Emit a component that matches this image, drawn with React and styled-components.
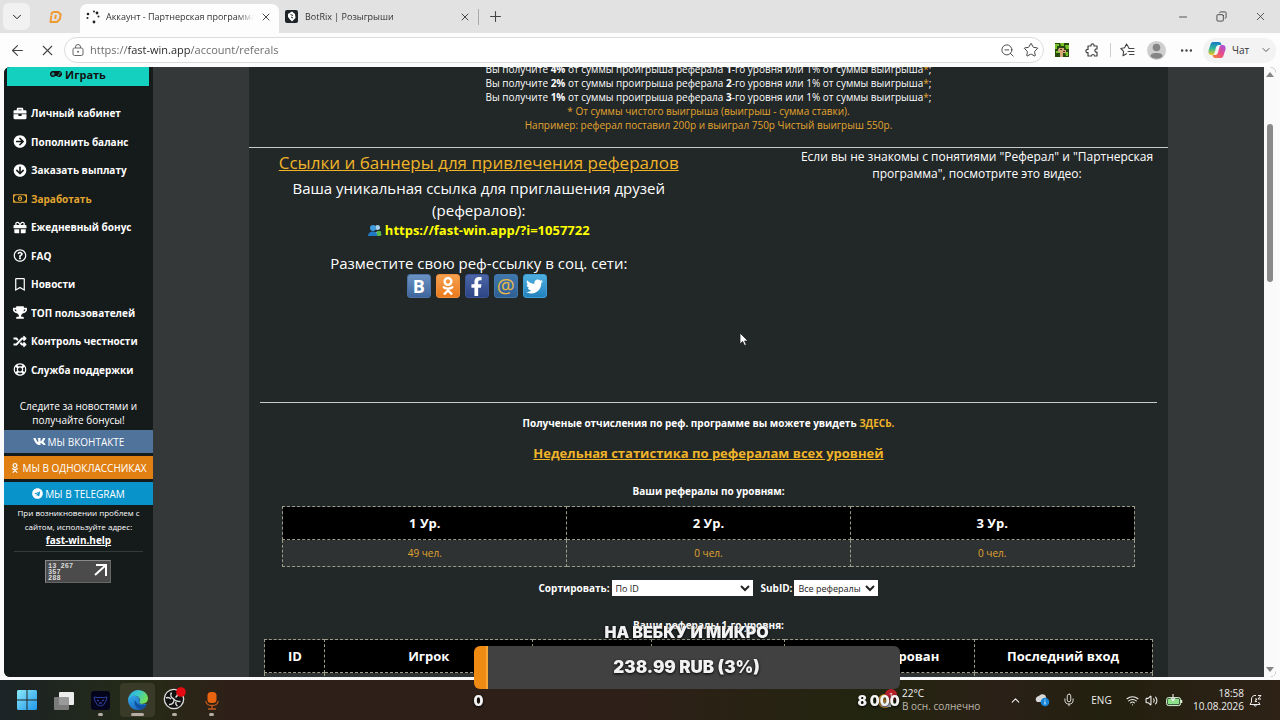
import React from "react";
import styled, { createGlobalStyle } from "styled-components";
import {
	FaArrowCircleDown,
	FaArrowCircleRight,
	FaBriefcase,
	FaFacebookF,
	FaGamepad,
	FaGift,
	FaOdnoklassniki,
	FaRandom,
	FaRegBookmark,
	FaRegLifeRing,
	FaRegMoneyBillAlt,
	FaRegQuestionCircle,
	FaTelegram,
	FaTrophy,
	FaTwitter,
	FaVk,
} from "react-icons/fa";
import {
	ArrowLeft,
	ChevronDown,
	ChevronUp,
	Copy,
	Ellipsis,
	Mic,
	Minus,
	Plus,
	Star,
	Volume2,
	Wifi,
	X,
	ZoomOut,
} from "lucide-react";

const GlobalStyle = createGlobalStyle`
	* {
		box-sizing: border-box;
	}
	body {
		margin: 0;
		font-family: "Open Sans", "Noto Sans", sans-serif;
		overflow: hidden;
	}
	button {
		font-family: inherit;
		padding: 0;
		border: none;
		background: none;
	}
	p, h2, h3, ul {
		margin: 0;
		padding: 0;
	}
	svg {
		display: block;
		flex: none;
	}
`;

const Screen = styled.div`
	display: flex;
	flex-direction: column;
	height: 100vh;
	background: #fbfbfb;
`;

/* ---------- browser ---------- */

const TabStrip = styled.div`
	display: flex;
	align-items: flex-end;
	height: 33px;
	padding-left: 3px;
	background: #e2e2e2;
	color: #333;
`;

const TabMenu = styled.button`
	display: flex;
	align-items: center;
	justify-content: center;
	width: 27px;
	height: 27px;
	margin-bottom: 3px;
	border-radius: 6px;
	background: #f1f1f1;
`;

const PinnedTab = styled.button`
	display: flex;
	align-items: center;
	justify-content: center;
	width: 50px;
	height: 33px;
`;

const Tab = styled.div`
	display: flex;
	align-items: center;
	gap: ${(props) => (props.$active ? 6 : 7)}px;
	width: 199px;
	height: 29px;
	padding: 0 7px 4px 6px;
	border-radius: 7px 7px 0 0;
	background: ${(props) => (props.$active ? "#fdfdfd" : "transparent")};
`;

const TabTitle = styled.span`
	flex: 1;
	overflow: hidden;
	white-space: nowrap;
	font-size: ${(props) => props.$size || 9}px;
	line-height: 16px;
	mask-image: linear-gradient(90deg, #000 88%, transparent);
`;

const IconButton = styled.button`
	display: flex;
	align-items: center;
	justify-content: center;
	width: ${(props) => props.$w || 20}px;
	height: 24px;
	color: #444;
`;

const TabDivider = styled.i`
	width: 1px;
	height: 16px;
	margin-bottom: 8px;
	background: #aaa;
`;

const NewTab = styled(IconButton)`
	margin: 0 auto 5px 4px;
`;

const WindowButtons = styled.div`
	display: flex;
	height: 33px;
	align-items: center;
`;

const Toolbar = styled.div`
	display: flex;
	align-items: center;
	height: 34px;
	padding: 0 4px 0 2px;
	background: #fdfdfd;
	color: #444;
`;

const AddressBar = styled.form`
	display: flex;
	flex: 1;
	align-items: center;
	height: 26px;
	margin-left: 2px;
	padding: 0 0 0 5px;
	border: 1px solid #dcdcdc;
	border-radius: 13px;
	background: #fff;
`;

const AddressInput = styled.input`
	flex: 1;
	min-width: 0;
	margin-left: 5px;
	padding: 0;
	border: none;
	outline: none;
	font: 11px/18px "Open Sans", "Noto Sans", sans-serif;
	/* the host part of the address is darker than the rest */
	background: linear-gradient(90deg, #666 0 38px, #222 38px 101px, #666 101px);
	background-clip: text;
	color: transparent;
`;

const ToolbarDivider = styled.i`
	width: 1px;
	height: 14px;
	margin: 0 4px 0 5px;
	background: #ccc;
`;

const CopilotButton = styled.button`
	display: flex;
	align-items: center;
	gap: 6px;
	height: 25px;
	width: 73px;
	margin-left: 3px;
	padding-left: 5px;
	border-radius: 12px;
	background: #f3f3f3;
	color: #333;
	font-size: 10px;

	svg:last-child {
		margin-left: auto;
		margin-right: 4px;
	}
`;

const Viewport = styled.div`
	display: flex;
	flex: 1;
	min-height: 0;
	margin: 0 4px 3px;
	border-radius: 6px;
	overflow: hidden;
	background: #353839;
`;

const Scrollbar = styled.div`
	display: flex;
	flex-direction: column;
	align-items: center;
	width: 12px;
	padding: 5px 0;
	background: #fafafa;
	color: #858585;
`;

const ScrollThumb = styled.i`
	width: 6px;
	height: 158px;
	margin: 47px 0 auto;
	border-radius: 3px;
	background: #8a8a8a;
`;

/* ---------- sidebar ---------- */

const Sidebar = styled.aside`
	width: 149px;
	flex: none;
	background: #151a1b;
	color: #fff;
	text-align: center;
`;

const PlayButton = styled.a`
	display: flex;
	align-items: center;
	justify-content: center;
	gap: 3px;
	height: 19px;
	margin: 0 4px 13px 3px;
	padding-bottom: 5px;
	background: #13d1be;
	color: #111;
	font-size: 11px;
	font-weight: 700;
	text-decoration: none;
`;

const NavList = styled.ul`
	display: grid;
	grid-auto-rows: 1fr;
	height: 285px;
	list-style: none;
`;

const NavLink = styled.a`
	display: flex;
	align-items: center;
	gap: 4px;
	height: 100%;
	padding-left: 9px;
	color: ${(props) => (props.$active ? "#e2a52f" : "#fff")};
	font-size: 10px;
	font-weight: 700;
	text-decoration: none;
	white-space: nowrap;

	svg {
		width: 14px;
	}
`;

const FollowText = styled.p`
	margin: 15px 0 3px;
	font-size: 10px;
	line-height: 14px;
`;

const SocialLink = styled.a`
	display: flex;
	align-items: center;
	justify-content: center;
	gap: 2px;
	height: 23px;
	margin-bottom: 3px;
	background: ${(props) => props.$color};
	color: #fff;
	font-size: 10px;
	text-decoration: none;
	white-space: nowrap;
`;

const HelpText = styled.p`
	margin: -2px 10px 8px;
	padding-bottom: 3px;
	border-bottom: 1px solid #34393a;
	font-size: 8px;
	line-height: 14px;
	white-space: nowrap;

	a {
		color: #fff;
		font-size: 10px;
		font-weight: 700;
		line-height: 12px;
	}
`;

const Counter = styled.div`
	display: flex;
	justify-content: space-between;
	width: 66px;
	height: 23px;
	margin-left: 41px;
	padding: 2px;
	border: 1px solid #8a8a8a;
	border-right-color: #666;
	border-bottom-color: #666;
	background: #4b4b4b;
	color: #ddd;
	font: 700 7px/6px "Liberation Mono", monospace;
	text-align: left;
	white-space: pre-line;
`;

/* ---------- main column ---------- */

const Main = styled.main`
	flex: 1;
	min-width: 0;
	margin: 0 96px;
	background: #222728;
	color: #fff;
	text-align: center;
	overflow: hidden;
`;

const Rates = styled.div`
	margin-top: -5px;
	padding-bottom: 15px;
	border-bottom: 1px solid #c9c9c9;
	font-size: 10px;
	line-height: 14px;
`;

const Gold = styled.span`
	color: #e2a52f;
`;

const Columns = styled.div`
	display: flex;
	justify-content: space-between;
	height: 254px;
`;

const LinksColumn = styled.section`
	width: 50%;
	padding-top: 4px;
`;

const LinksTitle = styled.h2`
	margin-bottom: 3px;
	font-size: 17px;
	font-weight: 400;
	line-height: 22px;

	a {
		color: #f0b429;
	}
`;

const BigText = styled.p`
	padding: 0 30px;
	font-size: 15px;
	line-height: 22px;
`;

const RefLink = styled.a`
	display: flex;
	align-items: center;
	justify-content: center;
	gap: 3px;
	margin-bottom: 12px;
	color: #ffff00;
	font-size: 13px;
	font-weight: 700;
	line-height: 19px;
	text-decoration: none;
`;

const ShareRow = styled.div`
	display: flex;
	justify-content: center;
	gap: 5px;
	padding-right: 4px;
`;

const ShareButton = styled.button`
	display: flex;
	align-items: center;
	justify-content: center;
	width: 24px;
	height: 24px;
	border: 1px solid ${(props) => props.$edge};
	border-radius: 3px;
	background: linear-gradient(${(props) => props.$from}, ${(props) => props.$to});
	color: ${(props) => props.$ink || "#fff"};
	font-size: ${(props) => (props.$thin ? 20 : 18)}px;
	font-weight: ${(props) => (props.$thin ? 400 : 700)};
	line-height: 20px;
`;

const VideoText = styled.section`
	width: 382px;
	font-size: 12px;
	line-height: 17px;
`;

const Stats = styled.section`
	margin: 0 11px;
	padding-top: 13px;
	border-top: 1px solid #c9c9c9;
`;

const SmallBold = styled.p`
	font-size: 10px;
	font-weight: 700;
	line-height: 14px;

	a {
		color: #f0b429;
		text-decoration: none;
	}
`;

const WeeklyTitle = styled.h3`
	margin: 13px 0 21px;
	font-size: 13px;
	line-height: 20px;

	a {
		color: #f0b429;
	}
`;

const Table = styled.table`
	width: ${(props) => props.$width};
	margin: ${(props) => (props.$wide ? 7 : 8)}px auto 13px;
	border-collapse: collapse;
	table-layout: fixed;

	th,
	td {
		padding: 0;
		border: 1px dashed #9c9a88;
	}
	th {
		height: 33px;
		background: #000;
		font-size: 13px;
	}
	td {
		height: 27px;
		background: #2e3233;
		color: #e2a52f;
		font-size: 10px;
	}
`;

const Filters = styled.form`
	display: flex;
	align-items: center;
	justify-content: center;
	gap: 2px;
	margin-bottom: 22px;
	font-size: 10px;
	font-weight: 700;
	line-height: 16px;
`;

const Select = styled.select`
	width: ${(props) => props.$width}px;
	height: 16px;
	margin-right: ${(props) => props.$gap || 0}px;
	padding: 0;
	border: none;
	border-radius: 0;
	background: #fff;
	color: #222;
	font: 9px "Open Sans", "Noto Sans", sans-serif;
`;

/* ---------- taskbar ---------- */

const Taskbar = styled.footer`
	display: flex;
	align-items: center;
	height: 40px;
	padding: 0 14px 0 9px;
	background: linear-gradient(
		90deg,
		#1b2326,
		#262b17 11%,
		#2e2018 18%,
		#2e2018 50%,
		#22250f 68%,
		#2b2017 78%,
		#22200f 86%,
		#2e2217
	);
	color: #eee;
`;

const Apps = styled.div`
	display: flex;
	gap: 2px;
	margin-right: auto;
`;

const AppButton = styled.button`
	display: flex;
	flex-direction: column;
	align-items: center;
	justify-content: flex-end;
	gap: 3px;
	width: 35px;
	height: 34px;
	padding-bottom: ${(props) => (props.$mark ? 1 : 7)}px;
	border-radius: 4px;
	background: ${(props) => (props.$active ? "#3a3a28" : "transparent")};

	&::after {
		content: "";
		display: ${(props) => (props.$mark ? "block" : "none")};
		width: ${(props) => props.$mark}px;
		height: 3px;
		border-radius: 2px;
		background: #b5ada4;
	}
`;

const Weather = styled.div`
	display: flex;
	align-items: center;
	gap: 5px;
	width: 123px;
	font-size: 10px;
	line-height: 13px;
	color: #f2f2f2;
	white-space: nowrap;

	small {
		display: block;
		color: #bdb8ac;
		font-size: 10px;
	}
`;

const Tray = styled.div`
	display: grid;
	grid-template-columns: 28px 27px 26px 39px 22px 17px 28px 56px 22px;
	align-items: center;
	justify-items: center;
	font-size: 10px;
	line-height: 13px;
`;

const Clock = styled.div`
	justify-self: end;
	text-align: right;
`;

/* ---------- donation goal over the screen ---------- */

const Goal = styled.div`
	position: fixed;
	left: 37%;
	bottom: 10px;
	width: 426px;
	color: #f2f2f2;
	font-family: Inter, "Open Sans", sans-serif;
	font-weight: 900;
	text-align: center;
	text-shadow: 0 1px 3px #000;
`;

const GoalTitle = styled.p`
	margin-bottom: 4px;
	font-size: 16px;
	line-height: 20px;
`;

const GoalBar = styled.div`
	height: 43px;
	border-radius: 6px;
	background: linear-gradient(90deg, #ef8a12 12px, #f5a836 12px 14px, #414141 14px);
	font-size: 17px;
	line-height: 43px;
`;

const GoalScale = styled.div`
	display: flex;
	justify-content: space-between;
	margin-top: 3px;
	font-size: 14px;
	line-height: 18px;
`;

const Cursor = styled.svg`
	position: fixed;
	left: 739px;
	top: 332px;
`;

const nav = [
	["Личный кабинет", FaBriefcase],
	["Пополнить баланс", FaArrowCircleRight],
	["Заказать выплату", FaArrowCircleDown],
	["Заработать", FaRegMoneyBillAlt],
	["Ежедневный бонус", FaGift],
	["FAQ", FaRegQuestionCircle],
	["Новости", FaRegBookmark],
	["ТОП пользователей", FaTrophy],
	["Контроль честности", FaRandom],
	["Служба поддержки", FaRegLifeRing],
];

const rates = [
	["4%", "1"],
	["2%", "2"],
	["1%", "3"],
];

const levels = [
	["1 Ур.", "49 чел."],
	["2 Ур.", "0 чел."],
	["3 Ур.", "0 чел."],
];

const DonationIcon = () => (
	<svg width="13" height="14" viewBox="0 0 13 14" fill="none" stroke="#ee9a35" strokeWidth="2" strokeLinejoin="round">
		<path d="M3.500 2h5.500l2.700 2.500-.8 4.500L8 12H1.500l.8-6.500M3 2 2.500 5" />
		<path d="M6.800 4.800 6.200 9" />
	</svg>
);

const LoadingIcon = () => (
	<svg width="14" height="14" viewBox="0 0 14 14" fill="#222">
		<circle cx="2" cy="4" r="1.300" />
		<circle cx="1.500" cy="8" r="1" />
		<circle cx="8" cy="1.500" r="1" />
		<circle cx="11" cy="3" r="1.400" />
		<circle cx="12.500" cy="6.500" r="1" />
		<circle cx="8" cy="12" r="1.400" />
	</svg>
);

const BotIcon = () => (
	<svg width="13" height="13" viewBox="0 0 13 13">
		<rect width="13" height="13" rx="2" fill="#1d2327" />
		<path d="M3 4 7 1.500l3 2.500.5 4L7 11.500 5 9.500 3 7z" fill="#fff" />
		<path d="M5.500 4.500 8 5.500M6 7l2 1" stroke="#1d2327" />
	</svg>
);

const LockIcon = () => (
	<svg width="12" height="12" viewBox="0 0 12 12" fill="none" stroke="#666">
		<rect x="1" y="4" width="10" height="7.500" rx="1.500" />
		<path d="M3.500 4V3a2.500 2.500 0 0 1 5 0v1" />
		<circle cx="6" cy="7.700" r=".6" fill="#555" />
	</svg>
);

const GameIcon = () => (
	<svg width="14" height="14" viewBox="0 0 14 14">
		<rect width="14" height="14" fill="#27490f" />
		<path d="M0 1h4v2H2v3H0zM5 0h4v3H6zM10 2h4v4h-3zM1 8h4v2H1zM10 9h3v4h-2z" fill="#79c32a" />
		<path d="M4 5h5v2h2v3H8v4H5V9H3V7z" fill="#d6a877" />
		<path d="M5 6h2v1H5zM8 8h2v1H8z" fill="#59301a" />
	</svg>
);

const ExtensionsIcon = () => (
	<svg width="14" height="15" viewBox="0 0 14 15" fill="none" stroke="#444" strokeWidth="1.200" strokeLinejoin="round">
		<path d="M3 3h3c-.5-2.800 3.500-2.800 3 0h3v3c-2.800-.5-2.800 3.500 0 3v4H9.500c0-2-3-2-3 0H3V9.500C.200 10 .200 6 3 6.500z" />
	</svg>
);

const FavoritesIcon = () => (
	<svg width="15" height="15" viewBox="0 0 15 15" fill="none" stroke="#444" strokeWidth="1.100" strokeLinejoin="round" strokeLinecap="round">
		<path d="M8.800 4.800 6.500 1 4.600 4.800.8 5.500l2.800 2.900L3 12.800l3.500-2" />
		<path d="M9 5.500h5M8 8.500h6M9.500 11.500H14" />
	</svg>
);

const AvatarIcon = () => (
	<svg width="19" height="19" viewBox="0 0 19 19">
		<circle cx="9.500" cy="9.500" r="9.500" fill="#cfcfcf" />
		<circle cx="9.500" cy="6.500" r="3.800" fill="#858585" />
		<path d="M3.500 15.500c0-3 2.500-3.500 6-3.500s6 .5 6 3.500a9 9 0 0 1-12 0z" fill="#858585" />
	</svg>
);

const CopilotIcon = () => (
	<svg width="18" height="18" viewBox="0 0 18 18">
		<defs>
			<linearGradient id="copilotA" x1="0" y1="0" x2="0" y2="1">
				<stop offset="0" stopColor="#1577c8" />
				<stop offset=".5" stopColor="#2fb99a" />
				<stop offset="1" stopColor="#f3c81e" />
			</linearGradient>
			<linearGradient id="copilotB" x1="1" y1="0" x2="0" y2="1">
				<stop offset="0" stopColor="#9a55e6" />
				<stop offset=".5" stopColor="#ea4c86" />
				<stop offset="1" stopColor="#f38a2c" />
			</linearGradient>
		</defs>
		<path d="M5 1h6c1.500 0 2 1 2.500 3H11C9 4 8.500 5 8 6.500L6.500 12c-.5 1.500-1 2-3 2C1 14 0 12 .5 9.500l2-6C3 2 3.500 1 5 1z" fill="url(#copilotA)" />
		<path d="M13 17H7c-1.500 0-2-1-2.500-3H7c2 0 2.500-1 3-2.500L11.500 6c.5-1.500 1-2 3-2C17 4 18 6 17.500 8.500l-2 6C15 16 14.500 17 13 17z" fill="url(#copilotB)" />
	</svg>
);

const FriendsIcon = () => (
	<svg width="14" height="13" viewBox="0 0 14 13">
		<circle cx="9.500" cy="3.500" r="2.500" fill="#a8cfe8" />
		<path d="M6 11c0-4 7-5 7.500 0z" fill="#7fb2d4" />
		<circle cx="5" cy="4" r="3" fill="#3f9de0" />
		<path d="M0 12c0-6 9.500-6 9.500 0z" fill="#1f78c4" />
		<rect x="9" y="7" width="4" height="5" rx="1" fill="#55b948" />
	</svg>
);

const ArrowUpRight = () => (
	<svg width="15" height="15" viewBox="0 0 15 15" fill="none" stroke="#fff" strokeWidth="2">
		<path d="M3 2h10v11M13 2 2 12" />
	</svg>
);

const StartIcon = () => (
	<svg width="20" height="20" viewBox="0 0 20 20">
		<defs>
			<linearGradient id="start" x1="0" y1="0" x2="1" y2="1">
				<stop offset="0" stopColor="#8be9fb" />
				<stop offset="1" stopColor="#2096e8" />
			</linearGradient>
		</defs>
		<path d="M1 0h8.500v9.500H0V1zM10.500 0H19l1 1v8.500h-9.500zM0 10.500h9.500V20H1l-1-1zM10.500 10.500H20V19l-1 1h-8.500z" fill="url(#start)" />
	</svg>
);

const TaskViewIcon = () => (
	<svg width="20" height="18" viewBox="0 0 20 18">
		<rect x="5" y="0" width="15" height="13" rx="1" fill="#ececec" />
		<rect x="0" y="5" width="15" height="13" rx="1" fill="#8b8b8b" opacity=".85" />
	</svg>
);

const BearIcon = () => (
	<svg width="19" height="19" viewBox="0 0 19 19" fill="none">
		<rect width="19" height="19" rx="3" fill="#04051a" />
		<path d="M3 6l3 .5h7L16 6l-1 4-2.500 4-3 1-3-1L4 10z" stroke="#2b3f9b" />
		<path d="M6 9l2 1M13 9l-2 1M8 12h3" stroke="#4a4ec0" />
	</svg>
);

const EdgeIcon = () => (
	<svg width="20" height="20" viewBox="0 0 24 24">
		<defs>
			<linearGradient id="edgeTop" x1="0" y1="0" x2="1" y2=".4">
				<stop offset="0" stopColor="#2fa5e4" />
				<stop offset=".5" stopColor="#37c6d0" />
				<stop offset="1" stopColor="#6fe05c" />
			</linearGradient>
			<linearGradient id="edgeBase" x1="0" y1="0" x2=".6" y2="1">
				<stop offset="0" stopColor="#36a8ea" />
				<stop offset="1" stopColor="#1668c0" />
			</linearGradient>
		</defs>
		<path d="M0 12C0 8 4 6 8 7c4 0 6 3 6 6-1 2 0 4 4 4 2 0 3-1 4 0 1 1-3 7-10 7C5 24 0 18 0 12z" fill="url(#edgeBase)" />
		<path d="M8.500 12c-2 5 1 10 6.500 11.500 4-1 6-3.500 7.300-6C17 19.500 10 18 8.500 12z" fill="#10519f" />
		<path d="M0 12C1 5 6 0 12 0c7 0 12 5 12 10 0 4-3 6.500-6.500 6.500-3 0-4.500-1-3.500-2.500 1.500-3-1-7-6-7-4 0-7 2-8 5z" fill="url(#edgeTop)" />
	</svg>
);

const ObsIcon = () => (
	<svg width="23" height="23" viewBox="0 0 23 23">
		<circle cx="11" cy="12" r="9.700" fill="#111" stroke="#ddd" strokeWidth="1.300" />
		<g fill="none" stroke="#ddd" strokeWidth="1.400">
			<path d="M8.500 5.500c-2 3 0 5.500 2.500 6.500" />
			<path d="M17.500 14.500c-3.500 0-5.500-.5-6.500-2.500" />
			<path d="M6 17.500c3.500.5 5.500-2.500 5-5.500" />
			<path d="M3 11c2-1 4 0 5 1M14.500 6c.5 2-.5 3.500-2 4.500M14.500 19c-1.500-.5-2-2.500-1.500-4" />
		</g>
		<circle cx="18" cy="5" r="4.800" fill="#e60b12" />
	</svg>
);

const RecorderIcon = () => (
	<svg width="14" height="19" viewBox="0 0 14 19" fill="none" stroke="#c4571a" strokeWidth="1.300">
		<rect x="2.500" y="1" width="9" height="11" rx="3.500" fill="#e86410" stroke="none" />
		<path d="M.7 10c1 6 11.600 6 12.600 0M7 14.500V18M3 18h8" />
	</svg>
);

const WeatherIcon = () => (
	<svg width="19" height="22" viewBox="0 0 19 22">
		<circle cx="7" cy="12" r="7" fill="#e6a02f" />
		<path d="M3 17c0-4 4-4 5-3 2-2 6 0 5 4H5z" fill="#b9c3d4" />
		<circle cx="13" cy="6" r="6" fill="#b81f2c" />
		<text x="11" y="9" fontSize="8" fill="#fff">1</text>
	</svg>
);

const CloudIcon = () => (
	<svg width="15" height="14" viewBox="0 0 15 14">
		<path d="M2 9C-1 6 2 3 4 3c2-3 7-2 7 1l1 5z" fill="#d8d8d8" />
		<circle cx="10" cy="9" r="4.300" fill="#1685d8" />
		<path d="M10 6.500v1M10 8.500v3" stroke="#fff" />
	</svg>
);

const BatteryIcon = () => (
	<svg width="17" height="13" viewBox="0 0 17 13">
		<rect x=".6" y="3.600" width="14" height="8" rx="2" fill="#3c5a3c" stroke="#d9f2d4" />
		<path d="M2 5h11v5H2z" fill="#8ee08a" />
		<path d="M15.500 6v3" stroke="#d9f2d4" strokeWidth="1.500" />
		<path d="M7 0v6M5 4l2 3 2-3" stroke="#fff" fill="none" />
	</svg>
);

const BellIcon = () => (
	<svg width="13" height="13" viewBox="0 0 13 13" fill="none" stroke="#eee">
		<path d="M7 1.500C4 1 2.500 3 2.500 5v3L1 10.500h10L9.500 8M5 11c.5 1.500 2 1.500 2.500 0" />
		<path d="M9 1.500h3L9 5h3M6 5h2L6 7.500h2" />
	</svg>
);

class App extends React.Component {
	renderBrowser = () => (
		<>
			<TabStrip>
				<TabMenu aria-label="Вкладки">
					<ChevronDown size={14} strokeWidth={1.5} />
				</TabMenu>
				<PinnedTab aria-label="DonationAlerts">
					<DonationIcon />
				</PinnedTab>
				<Tab $active>
					<LoadingIcon />
					<TabTitle>Аккаунт - Партнерская программа</TabTitle>
					<X size={12} strokeWidth={1.8} />
				</Tab>
				<Tab>
					<BotIcon />
					<TabTitle>BotRix | Розыгрыши</TabTitle>
					<X size={12} strokeWidth={1.8} />
				</Tab>
				<TabDivider />
				<NewTab $w={24} aria-label="Новая вкладка">
					<Plus size={17} strokeWidth={1.5} />
				</NewTab>
				<WindowButtons>
					<IconButton $w={39} aria-label="Свернуть"><Minus size={12} strokeWidth={1.8} /></IconButton>
					<IconButton $w={39} aria-label="Окно"><Copy size={11} strokeWidth={2} transform="rotate(90)" /></IconButton>
					<IconButton $w={39} aria-label="Закрыть"><X size={13} strokeWidth={1.6} /></IconButton>
				</WindowButtons>
			</TabStrip>
			<Toolbar>
				<IconButton $w={30} aria-label="Назад"><ArrowLeft size={17} strokeWidth={1.5} /></IconButton>
				<IconButton $w={30} aria-label="Остановить"><X size={17} strokeWidth={1.5} /></IconButton>
				<AddressBar>
					<IconButton $w={15} type="button" aria-label="О сайте"><LockIcon /></IconButton>
					<AddressInput aria-label="Адрес" defaultValue="https://fast-win.app/account/referals" />
					<IconButton $w={24} type="button" aria-label="Масштаб"><ZoomOut size={15} strokeWidth={1.5} /></IconButton>
					<IconButton $w={24} type="button" aria-label="В избранное"><Star size={16} strokeWidth={1.5} /></IconButton>
				</AddressBar>
				<IconButton $w={35} aria-label="Расширение"><GameIcon /></IconButton>
				<IconButton $w={26} aria-label="Расширения"><ExtensionsIcon /></IconButton>
				<ToolbarDivider />
				<IconButton $w={24} aria-label="Избранное"><FavoritesIcon /></IconButton>
				<IconButton $w={34} aria-label="Профиль"><AvatarIcon /></IconButton>
				<IconButton $w={27} aria-label="Меню"><Ellipsis size={15} strokeWidth={2} /></IconButton>
				<CopilotButton>
					<CopilotIcon />
					Чат
					<ChevronDown size={12} strokeWidth={1.6} />
				</CopilotButton>
			</Toolbar>
		</>
	);

	renderSidebar = () => (
		<Sidebar>
			<PlayButton href="#play">
				<FaGamepad size={12} />
				Играть
			</PlayButton>
			<NavList>
				{nav.map(([label, Icon]) => (
					<li key={label}>
						<NavLink href="#nav" $active={label === "Заработать"}>
							<Icon size={13} />
							{label}
						</NavLink>
					</li>
				))}
			</NavList>
			<FollowText>
				Следите за новостями и
				<br />
				получайте бонусы!
			</FollowText>
			<SocialLink href="#vk" $color="#50739b"><FaVk size={13} />МЫ ВКОНТАКТЕ</SocialLink>
			<SocialLink href="#ok" $color="#e07f12"><FaOdnoklassniki size={10} />МЫ В ОДНОКЛАССНИКАХ</SocialLink>
			<SocialLink href="#tg" $color="#0893cb"><FaTelegram size={11} />МЫ В TELEGRAM</SocialLink>
			<HelpText>
				При возникновении проблем с
				<br />
				сайтом, используйте адрес:
				<br />
				<a href="#help">fast-win.help</a>
			</HelpText>
			<Counter>
				{"13 267\n357\n288"}
				<ArrowUpRight />
			</Counter>
		</Sidebar>
	);

	renderMain = () => (
		<Main>
			<Rates>
				{rates.map(([percent, level]) => (
					<p key={level}>
						Вы получите <b>{percent}</b> от суммы проигрыша реферала <b>{level}</b>-го уровня или 1% от суммы
						выигрыша<Gold>*</Gold>;
					</p>
				))}
				<p><Gold>* От суммы чистого выигрыша (выигрыш - сумма ставки).</Gold></p>
				<p><Gold>Например: реферал поставил 200р и выиграл 750р Чистый выигрыш 550р.</Gold></p>
			</Rates>
			<Columns>
				<LinksColumn>
					<LinksTitle><a href="#banners">Ссылки и баннеры для привлечения рефералов</a></LinksTitle>
					<BigText>
						Ваша уникальная ссылка для приглашения друзей
						<br />
						(рефералов):
					</BigText>
					<RefLink href="#ref">
						<FriendsIcon />
						https://fast-win.app/?i=1057722
					</RefLink>
					<BigText>Разместите свою реф-ссылку в соц. сети:</BigText>
					<ShareRow>
						<ShareButton $from="#6c93c4" $to="#3f669c" $edge="#4b71a6">B</ShareButton>
						<ShareButton aria-label="Одноклассники" $from="#f7a250" $to="#ea7a1d" $edge="#ef8f3c"><FaOdnoklassniki size={18} /></ShareButton>
						<ShareButton aria-label="Facebook" $from="#4c66a8" $to="#2d4484" $edge="#3b5596"><FaFacebookF size={19} /></ShareButton>
						<ShareButton $thin $from="#3f78ae" $to="#2e5f94" $edge="#4177a8" $ink="#e9b84a">@</ShareButton>
						<ShareButton aria-label="Twitter" $from="#4fb0e0" $to="#2381bd" $edge="#3d9fd4"><FaTwitter size={17} /></ShareButton>
					</ShareRow>
				</LinksColumn>
				<VideoText>
					Если вы не знакомы с понятиями "Реферал" и "Партнерская
					<br />
					программа", посмотрите это видео:
				</VideoText>
			</Columns>
			<Stats>
				<SmallBold>
					Полученые отчисления по реф. программе вы можете увидеть <a href="#here">ЗДЕСЬ.</a>
				</SmallBold>
				<WeeklyTitle><a href="#weekly">Недельная статистика по рефералам всех уровней</a></WeeklyTitle>
				<SmallBold>Ваши рефералы по уровням:</SmallBold>
				<Table $width="95%">
					<thead>
						<tr>{levels.map(([title]) => <th key={title}>{title}</th>)}</tr>
					</thead>
					<tbody>
						<tr>{levels.map(([title, count]) => <td key={title}>{count}</td>)}</tr>
					</tbody>
				</Table>
				<Filters>
					<label htmlFor="sort">Сортировать:</label>
					<Select id="sort" $width={141} $gap={6}>
						<option>По ID</option>
					</Select>
					<label htmlFor="subid">SubID:</label>
					<Select id="subid" $width={84}>
						<option>Все рефералы</option>
					</Select>
				</Filters>
				<SmallBold>Ваши рефералы 1-го уровня:</SmallBold>
				<Table $width="99%" $wide>
					<colgroup>
						{[60, 208, 119, 133, 190, 178].map((w) => (
							<col key={w} style={{ width: `${(w / 888) * 100}%` }} />
						))}
					</colgroup>
					<thead>
						<tr>
							<th>ID</th>
							<th>Игрок</th>
							<th />
							<th />
							<th>Зарегистрирован</th>
							<th>Последний вход</th>
						</tr>
					</thead>
					<tbody>
						<tr>{[0, 1, 2, 3, 4, 5].map((i) => <td key={i} />)}</tr>
					</tbody>
				</Table>
			</Stats>
		</Main>
	);

	renderTaskbar = () => (
		<Taskbar>
			<Apps>
				<AppButton aria-label="Пуск"><StartIcon /></AppButton>
				<AppButton aria-label="Представление задач"><TaskViewIcon /></AppButton>
				<AppButton aria-label="Приложение" $mark={5}><BearIcon /></AppButton>
				<AppButton aria-label="Edge" $mark={13} $active><EdgeIcon /></AppButton>
				<AppButton aria-label="OBS" $mark={5}><ObsIcon /></AppButton>
				<AppButton aria-label="Диктофон" $mark={5}><RecorderIcon /></AppButton>
			</Apps>
			<Weather>
				<WeatherIcon />
				<div>
					22°C
					<small>В осн. солнечно</small>
				</div>
			</Weather>
			<Tray>
				<ChevronUp size={13} />
				<CloudIcon />
				<Mic size={14} strokeWidth={1.5} />
				<span>ENG</span>
				<Wifi size={13} />
				<Volume2 size={13} />
				<BatteryIcon />
				<Clock>
					18:58
					<br />
					10.08.2026
				</Clock>
				<BellIcon />
			</Tray>
		</Taskbar>
	);

	render() {
		return (
			<Screen>
				<GlobalStyle />
				{this.renderBrowser()}
				<Viewport>
					{this.renderSidebar()}
					{this.renderMain()}
					<Scrollbar>
						<svg width="8" height="5" viewBox="0 0 8 5" fill="currentColor"><path d="M4 0l4 5H0z" /></svg>
						<ScrollThumb />
						<svg width="8" height="5" viewBox="0 0 8 5" fill="currentColor"><path d="M4 5l4-5H0z" /></svg>
					</Scrollbar>
				</Viewport>
				{this.renderTaskbar()}
				<Goal>
					<GoalTitle>НА ВЕБКУ И МИКРО</GoalTitle>
					<GoalBar>238.99 RUB (3%)</GoalBar>
					<GoalScale>
						<span>0</span>
						<span>8 000</span>
					</GoalScale>
				</Goal>
				<Cursor width="10" height="15" viewBox="0 0 10 15">
					<path d="M1 1v11l2.700-2.500L5.500 13.500l1.800-.8L5.600 9H9z" fill="#fff" stroke="#222" strokeWidth=".8" />
				</Cursor>
			</Screen>
		);
	}
}

export default App;
